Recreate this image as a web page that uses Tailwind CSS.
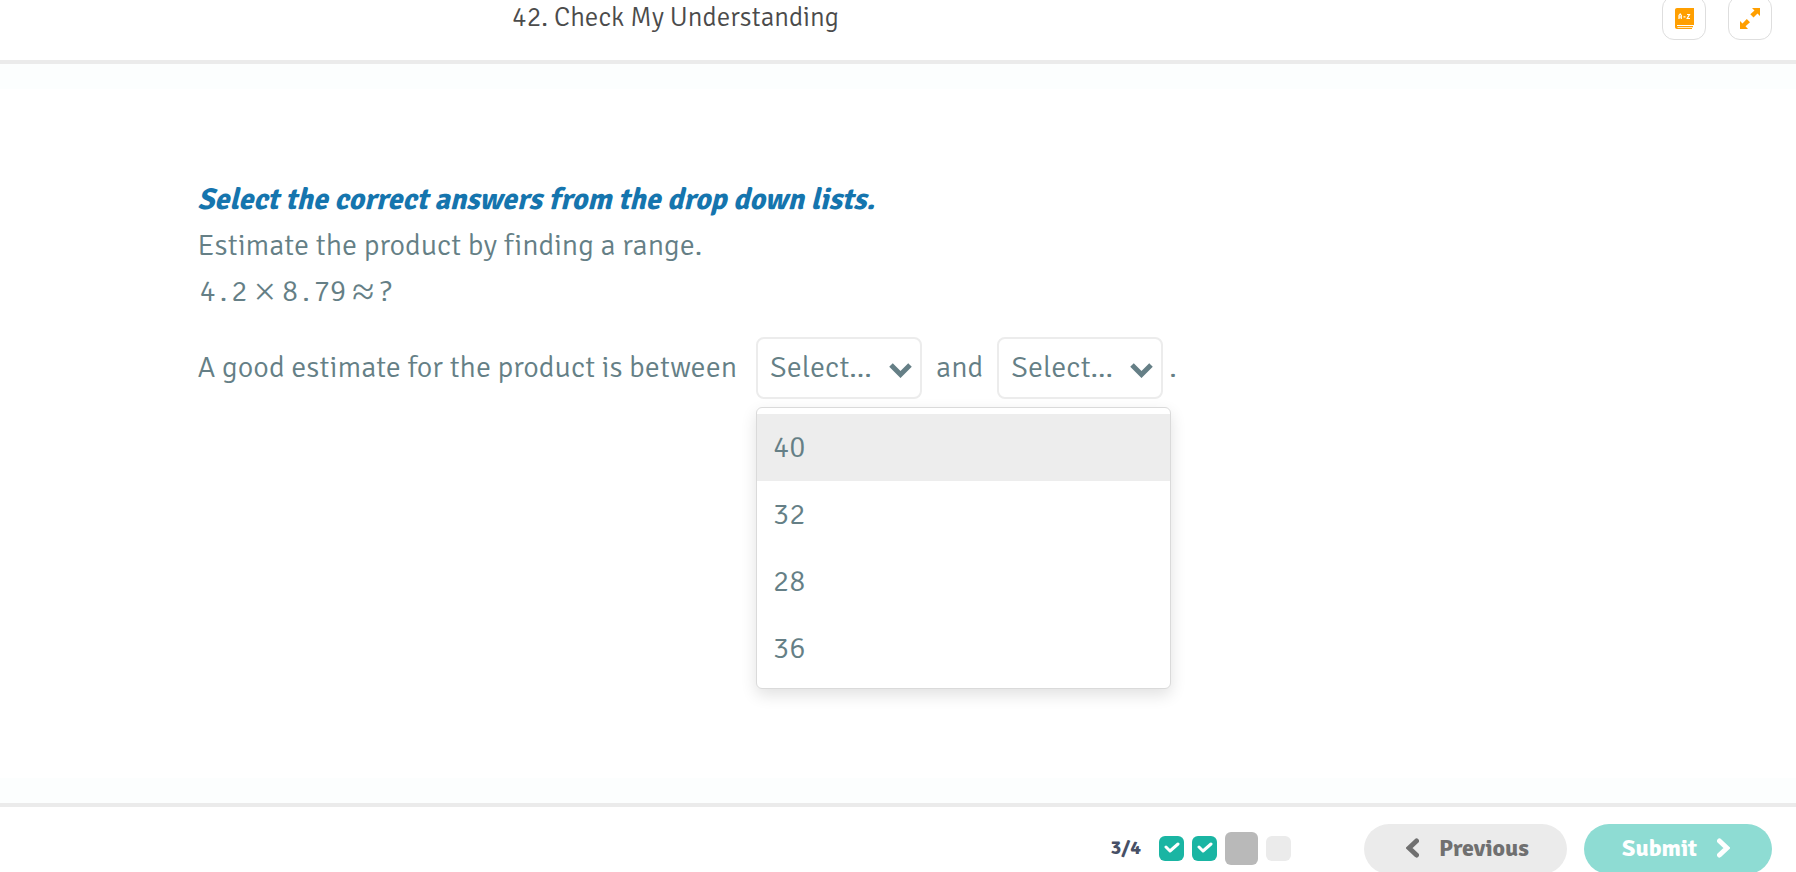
<!DOCTYPE html>
<html lang="en">

<head>
	<meta charset="utf-8">
	<meta name="viewport" content="width=device-width, initial-scale=1">
	<title>42. Check My Understanding</title>
	<script src="https://cdn.jsdelivr.net/npm/@tailwindcss/browser@4"></script>
</head>

<body class="h-screen flex flex-col overflow-hidden bg-white font-['Signika','Open_Sans',sans-serif] [font-variant-ligatures:none] font-light text-[#657f86]">

	<header class="-mt-1 pb-5 pr-6 flex items-center shrink-0 border-b-4 border-[#ebebeb]">
		<h1 class="ml-[28.9%] pb-[2px] grow text-[27px] leading-none text-[#4b4b4b]">42. Check My Understanding</h1>
		<div class="flex gap-[22px]">
			<button class="size-11 flex items-center justify-center border border-[#dedede] rounded-xl" aria-label="Glossary">
				<svg class="w-[19px] h-[21px]" viewBox="0 0 19 21" fill="#ff9f00">
					<path d="M2 0h17v17H0V2C0 .8.8 0 2 0z" />
					<path d="M0 17h2v1h16v1.200H2.500V20H17v1H2C.8 21 0 20.200 0 19z" />
					<path d="M4 11V7.500L5.200 6 6.300 7.500V11M4 9h2.300M8.500 8.800h2M12 6.500h2.500L12.200 10.500H15" fill="none" stroke="#fff" stroke-width="1.200" />
				</svg>
			</button>
			<button class="size-11 flex items-center justify-center border border-[#dedede] rounded-xl" aria-label="Full screen">
				<svg class="w-5 h-[21px]" viewBox="0 0 20 21" fill="#ff9f00">
					<path d="M12 0h8v8l-2.500-2.500L13.500 9.500l-3.200-3.200L14.500 2.500z" />
					<path d="M0 21v-8l2.500 2.500L6.800 11l3.200 3.200-4.500 4L8 21z" />
				</svg>
			</button>
		</div>
	</header>

	<div class="grow flex flex-col bg-[#fcfefe]">
		<main class="my-[25px] grow pt-[88px] pl-[11%] bg-white text-[30px] leading-[46px]">
			<p class="font-bold italic text-[#1575ae]">Select the correct answers from the drop down lists.</p>
			<p>Estimate the product by finding a range.</p>
			<p class="flex gap-[6px] pl-[2px]">
				<span>4<span class="mx-1">.</span>2</span>
				<span class="font-['Liberation_Serif',serif] text-[40px] leading-[46px]">×</span>
				<span>8<span class="mx-1">.</span>79</span>
				<span class="font-['Liberation_Serif',serif] text-[40px] leading-[46px]">≈</span>
				<span>?</span>
			</p>
			<div class="mt-[22px] flex items-center">
				<span>A good estimate for the product is between</span>
				<div class="relative ml-[19px]">
					<select id="low" aria-label="Lower estimate" class="block w-[166px] h-[62px] pl-3 appearance-none border-2 border-[#ececec] rounded-lg bg-white">
						<option>Select...</option>
						<option>40</option>
						<option>32</option>
						<option>28</option>
						<option>36</option>
					</select>
					<svg class="absolute right-[10px] top-[26px] w-[23px] h-[15px] pointer-events-none" viewBox="0 0 23 15" fill="none" stroke="#657f86" stroke-width="5">
						<path d="M2 2l9.500 9.500L21 2" />
					</svg>
					<ul id="lowMenu" role="listbox" aria-label="Lower estimate" class="absolute left-0 top-[70px] w-[415px] py-[6px] bg-white border border-[#dadada] rounded-md shadow-[0_6px_16px_rgba(0,0,0,0.12)]">
						<li role="option" aria-selected="true" class="h-[67px] px-4 flex items-center bg-[#ededed]">40</li>
						<li role="option" aria-selected="false" class="h-[67px] px-4 flex items-center">32</li>
						<li role="option" aria-selected="false" class="h-[67px] px-4 flex items-center">28</li>
						<li role="option" aria-selected="false" class="h-[67px] px-4 flex items-center">36</li>
					</ul>
				</div>
				<span class="mx-[14px]">and</span>
				<div class="relative">
					<select id="high" aria-label="Upper estimate" class="block w-[166px] h-[62px] pl-3 appearance-none border-2 border-[#ececec] rounded-lg bg-white">
						<option>Select...</option>
						<option>40</option>
						<option>32</option>
						<option>28</option>
						<option>36</option>
					</select>
					<svg class="absolute right-[10px] top-[26px] w-[23px] h-[15px] pointer-events-none" viewBox="0 0 23 15" fill="none" stroke="#657f86" stroke-width="5">
						<path d="M2 2l9.500 9.500L21 2" />
					</svg>
				</div>
				<span class="ml-[6px]">.</span>
			</div>
		</main>
	</div>

	<footer class="h-[69px] pt-[17px] pr-6 flex items-start justify-end shrink-0 border-t-4 border-[#ebebeb] font-bold">
		<div class="h-12 mr-[73px] flex items-center gap-2">
			<span class="mr-[10px] text-[20px] text-[#475066]">3/4</span>
			<span class="size-[25px] flex items-center justify-center rounded-md bg-[#1ab5a3]">
				<svg class="w-4 h-3" viewBox="0 0 16 12" fill="none" stroke="#fff" stroke-width="3" stroke-linecap="round" stroke-linejoin="round">
					<path d="M2 5l4 4 8-7" />
				</svg>
			</span>
			<span class="size-[25px] flex items-center justify-center rounded-md bg-[#1ab5a3]">
				<svg class="w-4 h-3" viewBox="0 0 16 12" fill="none" stroke="#fff" stroke-width="3" stroke-linecap="round" stroke-linejoin="round">
					<path d="M2 5l4 4 8-7" />
				</svg>
			</span>
			<span class="size-[33px] rounded-md bg-[#b9b9b9]"></span>
			<span class="size-[25px] rounded-md bg-[#ebebeb]"></span>
		</div>
		<button class="w-[203px] h-[50px] mr-[17px] pl-1 pb-[2px] flex items-center justify-center gap-5 rounded-full bg-[#ebebeb] text-[24px] text-[#707070]">
			<svg class="w-[13px] h-5" viewBox="0 0 13 20" fill="none" stroke="currentColor" stroke-width="5" stroke-linecap="round">
				<path d="M10.500 3L3 10l7.500 7" />
			</svg>
			Previous
		</button>
		<button class="w-[188px] h-[50px] pr-1 pb-[2px] flex items-center justify-center gap-5 rounded-full bg-[#8edcd3] text-[24px] text-white">
			Submit
			<svg class="w-[13px] h-5" viewBox="0 0 13 20" fill="none" stroke="currentColor" stroke-width="5" stroke-linecap="round">
				<path d="M2.500 3L10 10l-7.500 7" />
			</svg>
		</button>
	</footer>
</body>
<script>
	let low = document.getElementById("low");
	let lowMenu = document.getElementById("lowMenu");

	lowMenu.addEventListener("click", (e) => {
		low.value = e.target.textContent;
		lowMenu.hidden = true;
	});
</script>

</html>
